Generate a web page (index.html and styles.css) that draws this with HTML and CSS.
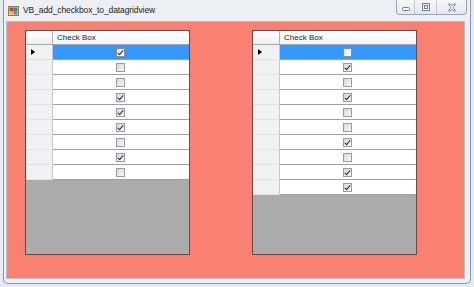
FILE: index.html
```html
<!DOCTYPE html>
<html>
<head>
<meta charset="utf-8">
<link rel="stylesheet" href="styles.css">
</head>
<body>
<div class="window">
  <div class="titlebar">
    <svg class="appicon" width="11" height="11" viewBox="0 0 11 11">
      <rect x="0.5" y="1.5" width="10" height="9" fill="#e8e0c8" stroke="#8a7c5a"/>
      <rect x="1.5" y="2.5" width="4" height="3.5" fill="#d93a2a"/>
      <rect x="5.5" y="2.5" width="4" height="3.5" fill="#3b7fd6"/>
      <rect x="1.5" y="6" width="4" height="3.5" fill="#f0c030"/>
      <rect x="5.5" y="6" width="4" height="3.5" fill="#5aa84a"/>
    </svg>
    <span class="title">VB_add_checkbox_to_datagridview</span>
    <div class="spacer"></div>
    <div class="capbtns">
      <div class="cap cap-min">
        <svg width="10" height="6" viewBox="0 0 10 6"><rect x="1.5" y="1.5" width="7" height="3" rx="1" fill="#fff" stroke="#6f7c8c"/></svg>
      </div>
      <div class="cap cap-max">
        <svg width="10" height="9" viewBox="0 0 10 9"><rect x="1.5" y="0.5" width="7" height="7" fill="#fff" stroke="#6f7c8c"/><rect x="3.5" y="2.5" width="3" height="3" fill="none" stroke="#6f7c8c"/></svg>
      </div>
      <div class="cap cap-close">
        <svg width="10" height="9" viewBox="0 0 10 9"><path d="M1.5 1 L3.5 1 L5 2.8 L6.5 1 L8.5 1 L6.2 4.5 L8.5 8 L6.5 8 L5 6.2 L3.5 8 L1.5 8 L3.8 4.5 Z" fill="#fff" stroke="#6f7c8c" stroke-width="0.9" stroke-linejoin="round"/></svg>
      </div>
    </div>
  </div>
  <div class="client">
    <div class="grid grid-left">
      <div class="hrow">
        <div class="rh corner"></div>
        <div class="colh">Check Box</div>
      </div>
      <div class="row sel"><div class="rh"><span class="arrow"></span></div><div class="cell"><span class="cb on"></span></div></div>
      <div class="row"><div class="rh"></div><div class="cell"><span class="cb"></span></div></div>
      <div class="row"><div class="rh"></div><div class="cell"><span class="cb"></span></div></div>
      <div class="row"><div class="rh"></div><div class="cell"><span class="cb on"></span></div></div>
      <div class="row"><div class="rh"></div><div class="cell"><span class="cb on"></span></div></div>
      <div class="row"><div class="rh"></div><div class="cell"><span class="cb on"></span></div></div>
      <div class="row"><div class="rh"></div><div class="cell"><span class="cb"></span></div></div>
      <div class="row"><div class="rh"></div><div class="cell"><span class="cb on"></span></div></div>
      <div class="row"><div class="rh"></div><div class="cell"><span class="cb"></span></div></div>
    </div>
    <div class="grid grid-right">
      <div class="hrow">
        <div class="rh corner"></div>
        <div class="colh">Check Box</div>
      </div>
      <div class="row sel"><div class="rh"><span class="arrow"></span></div><div class="cell"><span class="cb"></span></div></div>
      <div class="row"><div class="rh"></div><div class="cell"><span class="cb on"></span></div></div>
      <div class="row"><div class="rh"></div><div class="cell"><span class="cb"></span></div></div>
      <div class="row"><div class="rh"></div><div class="cell"><span class="cb on"></span></div></div>
      <div class="row"><div class="rh"></div><div class="cell"><span class="cb"></span></div></div>
      <div class="row"><div class="rh"></div><div class="cell"><span class="cb"></span></div></div>
      <div class="row"><div class="rh"></div><div class="cell"><span class="cb on"></span></div></div>
      <div class="row"><div class="rh"></div><div class="cell"><span class="cb"></span></div></div>
      <div class="row"><div class="rh"></div><div class="cell"><span class="cb on"></span></div></div>
      <div class="row"><div class="rh"></div><div class="cell"><span class="cb on"></span></div></div>
    </div>
  </div>
</div>
</body>
</html>
```
FILE: styles.css
```css
html, body {
  margin: 0;
  padding: 0;
}
body {
  width: 474px;
  height: 287px;
  overflow: hidden;
  background: #e4ebf3;
  font-family: "Liberation Sans", Arial, sans-serif;
}
.window {
  margin-left: 3px;
  width: 468px;
  height: 284px;
  box-sizing: border-box;
  border: 1px solid #8b97a6;
  border-top: none;
  border-radius: 0 0 5px 5px;
  background: #eceff3;
  display: flex;
  flex-direction: column;
  padding: 0 5px 5px 3px;
}
.titlebar {
  height: 22px;
  display: flex;
  align-items: flex-start;
  flex-shrink: 0;
}
.appicon {
  margin: 5px 0 0 1px;
}
.title {
  margin: 5px 0 0 4px;
  font-size: 8.5px;
  line-height: 11px;
  color: #1c1c1c;
  letter-spacing: -0.1px;
}
.spacer {
  flex: 1;
}
.capbtns {
  display: flex;
  height: 15px;
  box-sizing: border-box;
  border: 1px solid #9aa4b1;
  border-top: none;
  border-radius: 0 0 4px 4px;
  background: linear-gradient(#f6f7f9, #e4e8ee);
  margin-right: -2px;
}
.cap {
  display: flex;
  align-items: center;
  justify-content: center;
  border-left: 1px solid #c2c9d2;
}
.cap:first-child {
  border-left: none;
}
.cap-min { width: 17px; padding-top: 3px; }
.cap-max { width: 21px; }
.cap-close { width: 29px; }
.client {
  width: 457px;
  height: 256px;
  background: #fa8072;
  box-shadow: 0 0 0 1px #b8bfc8;
  display: flex;
  align-items: flex-start;
  padding: 8px 0 0 18px;
  box-sizing: border-box;
  gap: 62px;
}
.grid {
  width: 165px;
  height: 225px;
  box-sizing: border-box;
  border: 1px solid #6b4843;
  background: #ababab;
  display: flex;
  flex-direction: column;
}
.hrow {
  display: flex;
  height: 14px;
  flex-shrink: 0;
}
.rh {
  width: 27px;
  flex-shrink: 0;
  box-sizing: border-box;
  background: #f0f1f3;
  border-right: 1px solid #c8c8c8;
  border-bottom: 1px solid #e2e3e5;
  display: flex;
  align-items: center;
  padding-left: 5px;
}
.corner {
  background: linear-gradient(#ffffff, #eef0f2);
  border-bottom: 1px solid #a8a8a8;
  border-right: 1px solid #b0b0b0;
}
.colh {
  flex: 1;
  background: linear-gradient(#ffffff, #f2f3f5);
  border-bottom: 1px solid #a8a8a8;
  font-size: 8px;
  line-height: 13px;
  color: #1e1e1e;
  padding-left: 4px;
}
.row {
  display: flex;
  height: 15px;
  flex-shrink: 0;
}
.cell {
  flex: 1;
  background: #ffffff;
  border-bottom: 1px solid #a0a0a0;
  display: flex;
  align-items: center;
  justify-content: center;
}
.sel .cell {
  background: #3399ff;
}
.arrow {
  width: 0;
  height: 0;
  border-top: 3px solid transparent;
  border-bottom: 3px solid transparent;
  border-left: 4px solid #000;
}
.cb {
  width: 7px;
  height: 7px;
  border: 1px solid #9a9a9a;
  background: linear-gradient(135deg, #d8d8d8, #f7f7f7);
  position: relative;
  margin-right: 1px;
}
.sel .cb {
  border-color: #8d8d8d;
  background: linear-gradient(135deg, #e2e2e2, #ffffff);
}
.cb.on::after {
  content: "";
  position: absolute;
  left: 2px;
  top: 0px;
  width: 2px;
  height: 5px;
  border-right: 1.5px solid #1d2b48;
  border-bottom: 1.5px solid #1d2b48;
  transform: rotate(40deg);
}
```
